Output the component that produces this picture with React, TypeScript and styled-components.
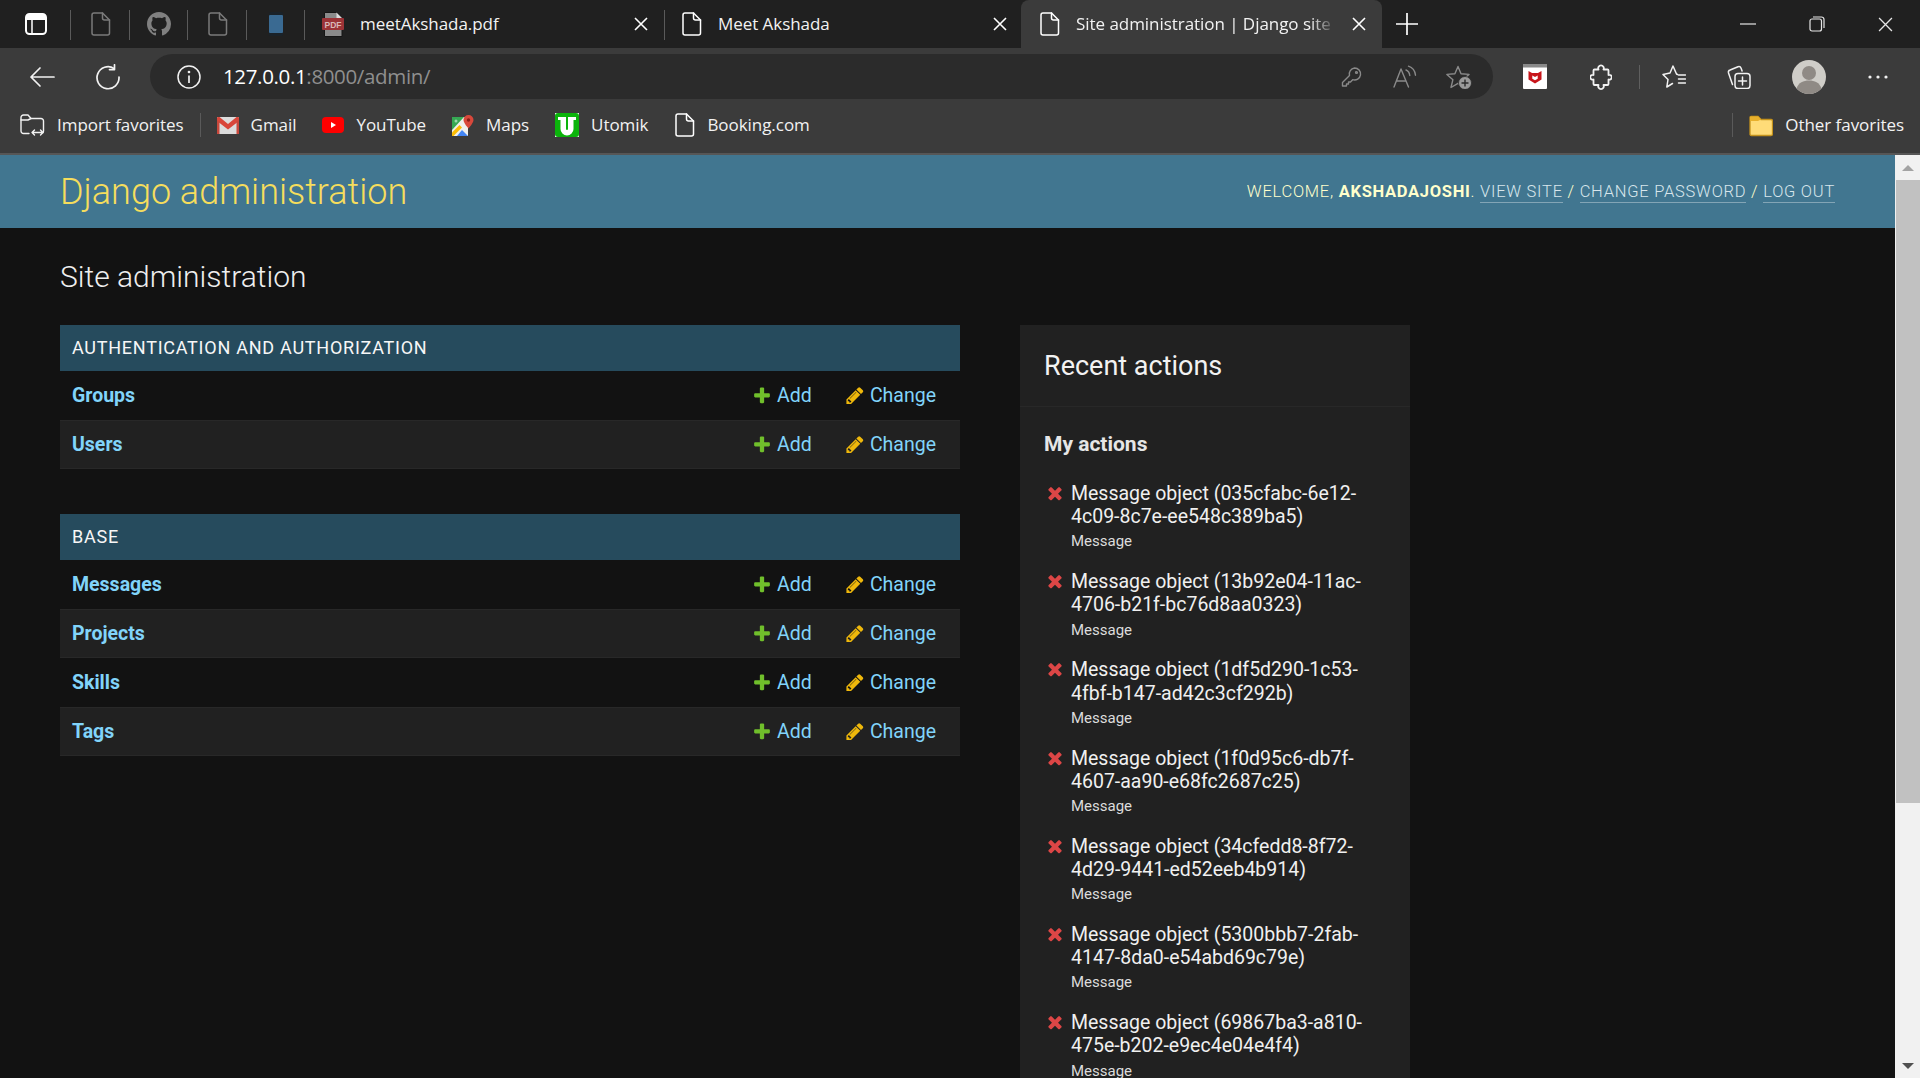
import React from "react";
import styled, { createGlobalStyle } from "styled-components";

const Global = createGlobalStyle`
  html, body { margin: 0; padding: 0; height: 1078px; overflow: hidden; background: #121212; }
  * { box-sizing: border-box; }
  #root { height: 1078px; }
`;

const uiFont = `"Open Sans", "Noto Sans", sans-serif`;
const pageFont = `Roboto, "Liberation Sans", sans-serif`;

const Shell = styled.div`
  height: 1078px;
  display: flex;
  flex-direction: column;
  overflow: hidden;
  font-family: ${pageFont};
`;

/* ---------- browser chrome ---------- */
const TabStrip = styled.div`
  height: 48px;
  flex: none;
  background: #202020;
  display: flex;
  align-items: stretch;
`;
const Pinned = styled.div<{ $w: number }>`
  width: ${(p) => p.$w}px;
  flex: none;
  display: flex;
  align-items: center;
  justify-content: center;
  position: relative;
  &::after {
    content: "";
    position: absolute;
    right: 0;
    top: 10px;
    bottom: 8px;
    width: 1px;
    background: #5a5a5a;
  }
`;
const Tab = styled.div<{ $w: number; $active?: boolean; $sep?: boolean; $pr: number }>`
  width: ${(p) => p.$w}px;
  flex: none;
  display: flex;
  align-items: center;
  gap: 16px;
  padding: 0 ${(p) => p.$pr}px 0 ${(p) => (p.$active ? 19 : 17)}px;
  background: ${(p) => (p.$active ? "#3b3b3b" : "transparent")};
  border-radius: ${(p) => (p.$active ? "8px 8px 0 0" : "0")};
  position: relative;
  ${(p) =>
    p.$sep
      ? `&::after { content: ""; position: absolute; right: 0; top: 10px; bottom: 8px; width: 1px; background: #5a5a5a; }`
      : ""}
`;
const TabTitle = styled.span<{ $fade?: boolean }>`
  flex: 1;
  min-width: 0;
  white-space: nowrap;
  overflow: hidden;
  font: 400 17px/22px ${uiFont};
  color: #f2f2f2;
  letter-spacing: -0.05px;
  ${(p) =>
    p.$fade
      ? `-webkit-mask-image: linear-gradient(to right, #000 90%, transparent 100%); mask-image: linear-gradient(to right, #000 90%, transparent 100%);`
      : ""}
`;
const NewTab = styled.div`
  width: 50px;
  flex: none;
  display: flex;
  align-items: center;
  justify-content: center;
`;
const Spacer = styled.div`
  flex: 1;
`;
const WindowButton = styled.div`
  width: 69px;
  flex: none;
  display: flex;
  align-items: center;
  justify-content: center;
`;
const Toolbar = styled.div`
  height: 57px;
  flex: none;
  background: #3b3b3b;
  padding: 6px 0 6px 0;
  display: flex;
  align-items: stretch;
`;
const ToolButton = styled.div<{ $w: number }>`
  width: ${(p) => p.$w}px;
  flex: none;
  display: flex;
  align-items: center;
  justify-content: center;
`;
const AddressBar = styled.div`
  width: 1343px;
  flex: none;
  background: #2b2b2b;
  border-radius: 23px;
  display: flex;
  align-items: center;
  padding-left: 27px;
  margin: 0 14px 0 18px;
`;
const Url = styled.div`
  flex: 1;
  margin-left: 22px;
  padding-bottom: 2px;
  font: 400 20.5px/26px ${uiFont};
  letter-spacing: -0.35px;
  color: #8f8f8f;
  & b {
    font-weight: 400;
    color: #fff;
  }
`;
const ToolSep = styled.div`
  width: 1px;
  height: 24px;
  align-self: center;
  background: #5f5f5f;
  flex: none;
`;
const BookmarkBar = styled.div`
  height: 50px;
  flex: none;
  background: #3b3b3b;
  border-bottom: 2px solid #565656;
  display: flex;
  align-items: center;
  padding: 0 0 8px 20px;
`;
const Bookmark = styled.div<{ $mr?: number }>`
  display: flex;
  align-items: center;
  gap: 12px;
  margin-right: ${(p) => p.$mr ?? 26}px;
  font: 400 17px/22px ${uiFont};
  letter-spacing: -0.05px;
  color: #f2f2f2;
  white-space: nowrap;
`;
const BookSep = styled.div`
  width: 1px;
  height: 24px;
  background: #5a5a5a;
  margin-right: 16px;
  flex: none;
`;

/* ---------- page ---------- */
const Viewport = styled.div`
  flex: 1;
  min-height: 0;
  display: flex;
`;
const Page = styled.div`
  flex: 1;
  min-width: 0;
  background: #121212;
  overflow: hidden;
`;
const Header = styled.header`
  height: 73px;
  background: #417690;
  display: flex;
  align-items: center;
  justify-content: space-between;
  padding: 0 60px;
`;
const Branding = styled.h1`
  margin: 0;
  font: 300 36px/44px ${pageFont};
  color: #f5dd5d;
`;
const UserTools = styled.div`
  font: 300 16.5px/22px ${pageFont};
  color: #ffffcc;
  text-transform: uppercase;
  letter-spacing: 0.75px;
  & strong {
    font-weight: 700;
    letter-spacing: 0.7px;
  }
`;
const ToolLink = styled.a`
  color: #d8e6ec;
  border-bottom: 1px solid rgba(255, 255, 255, 0.35);
  padding-bottom: 1px;
`;
const Content = styled.main`
  padding: 31px 60px 0;
`;
const Title = styled.h2`
  margin: 0 0 30px;
  font: 300 30px/36px ${pageFont};
  color: #eeeeee;
`;
const Columns = styled.div`
  display: flex;
  align-items: flex-start;
  gap: 60px;
`;
const MainColumn = styled.div`
  width: 900px;
  flex: none;
  display: flex;
  flex-direction: column;
  gap: 45px;
`;
const Module = styled.section``;
const Caption = styled.div`
  height: 46px;
  background: #264b5d;
  display: flex;
  align-items: center;
  padding-left: 12px;
  font: 400 18px/24px ${pageFont};
  letter-spacing: 0.75px;
  color: #f7f7f7;
  text-transform: uppercase;
`;
const Row = styled.div<{ $alt?: boolean }>`
  height: 49px;
  display: grid;
  grid-template-columns: 1fr 93px 91px;
  align-items: center;
  padding: 0 24px 0 12px;
  background: ${(p) => (p.$alt ? "#212121" : "#121212")};
  border-top: 1px solid ${(p) => (p.$alt ? "#282828" : "transparent")};
  border-bottom: 1px solid ${(p) => (p.$alt ? "#282828" : "transparent")};
`;
const RowName = styled.a`
  font: 700 19.5px/24px ${pageFont};
  letter-spacing: 0;
  color: #81d4fa;
`;
const RowAction = styled.a`
  display: flex;
  align-items: center;
  gap: 5px;
  font: 400 19.5px/24px ${pageFont};
  color: #81d4fa;
`;
const Recent = styled.aside`
  width: 390px;
  flex: none;
  background: #212121;
  padding-bottom: 40px;
`;
const RecentHead = styled.h2`
  margin: 0;
  height: 82px;
  display: flex;
  align-items: center;
  padding-left: 24px;
  border-bottom: 1px solid #282828;
  font: 400 27px/32px ${pageFont};
  color: #f2f2f2;
`;
const MyActions = styled.h3`
  margin: 0;
  padding: 25px 24px 0;
  font: 700 21px/24px ${pageFont};
  color: #e6e6e6;
`;
const ActionList = styled.ul`
  list-style: none;
  margin: 26px 0 0;
  padding: 0 24px 0 25px;
  display: flex;
  flex-direction: column;
  gap: 18.8px;
`;
const ActionItem = styled.li`
  display: grid;
  grid-template-columns: 26px 1fr;
`;
const ActionIcon = styled.div`
  padding-top: 1px;
`;
const ActionName = styled.div`
  font: 400 19.5px/23.2px ${pageFont};
  color: #f0f0f0;
  overflow-wrap: anywhere;
`;
const ActionType = styled.div`
  margin-top: 3px;
  font: 400 15px/20px ${pageFont};
  color: #dcdcdc;
`;
const ScrollTrack = styled.div`
  width: 25px;
  flex: none;
  background: #f1f1f1;
  display: flex;
  flex-direction: column;
  align-items: stretch;
  padding-left: 1px;
`;
const ScrollCap = styled.div<{ $up?: boolean }>`
  height: 25px;
  flex: none;
  display: flex;
  align-items: center;
  justify-content: center;
  &::before {
    content: "";
    width: 0;
    height: 0;
    border-left: 6px solid transparent;
    border-right: 6px solid transparent;
    ${(p) => (p.$up ? "border-bottom: 6px solid #a3a3a3;" : "border-top: 6px solid #505050;")}
  }
`;
const ScrollThumb = styled.div`
  height: 623px;
  flex: none;
  background: #c1c1c1;
`;
const ScrollRest = styled.div`
  flex: 1;
`;

/* ---------- drawings ---------- */
const Line = { fill: "none", strokeLinecap: "round", strokeLinejoin: "round" } as const;

const SidebarIcon = () => (
  <svg width="22" height="22" viewBox="0 0 22 22">
    <rect x="1" y="1" width="20" height="20" rx="3.5" fill="none" stroke="#fff" strokeWidth="2" />
    <path d="M1 4.500A3.500 3.500 0 0 1 4.500 1h13A3.500 3.500 0 0 1 21 4.500V7H1z" fill="#fff" />
    <path d="M7 7v14" stroke="#fff" strokeWidth="1.500" />
  </svg>
);
const PageIcon = ({ c = "#fff", s = 1.5 }: { c?: string; s?: number }) => (
  <svg width="20" height="24" viewBox="0 0 20 24" {...Line} stroke={c} strokeWidth={s}>
    <path d="M3 1h8.500L18.500 8v13a2 2 0 0 1-2 2H3a2 2 0 0 1-2-2V3A2 2 0 0 1 3 1z" />
    <path d="M11.500 1V6a2 2 0 0 0 2 2h5" />
  </svg>
);
const GithubIcon = () => (
  <svg width="24" height="24" viewBox="0 0 16 16" fill="#808080">
    <path d="M8 0C3.58 0 0 3.58 0 8c0 3.54 2.29 6.53 5.47 7.59.4.07.55-.17.55-.38 0-.19-.01-.82-.01-1.49-2.01.37-2.53-.49-2.69-.94-.09-.23-.48-.94-.82-1.13-.28-.15-.68-.52-.01-.53.63-.01 1.08.58 1.23.82.72 1.21 1.87.87 2.33.66.07-.52.28-.87.51-1.07-1.78-.2-3.64-.89-3.64-3.95 0-.87.31-1.59.82-2.15-.08-.2-.36-1.02.08-2.12 0 0 .67-.21 2.2.82.64-.18 1.32-.27 2-.27s1.36.09 2 .27c1.53-1.04 2.2-.82 2.2-.82.44 1.1.16 1.92.08 2.12.51.56.82 1.27.82 2.15 0 3.07-1.87 3.75-3.65 3.95.29.25.54.73.54 1.48 0 1.07-.01 1.93-.01 2.2 0 .21.15.46.55.38A8.01 8.01 0 0 0 16 8c0-4.42-3.58-8-8-8z" />
  </svg>
);
const PhoneTab = () => (
  <svg width="14" height="24" viewBox="0 0 14 24">
    <rect width="14" height="24" rx="1.500" fill="#1a2229" />
    <rect y="3" width="14" height="18" rx="1" fill="#3a6a92" />
  </svg>
);
const PdfIcon = () => (
  <svg width="22" height="25" viewBox="0 0 22 25">
    <path d="M2.500 0.500h12l5.500 5.500v18.500H2.500z" fill="#8a8a8a" stroke="#151515" />
    <path d="M14.500 0.500v5.500h5.500z" fill="#dcdcdc" />
    <rect x="0" y="6" width="22" height="12" rx="1" fill="#9c3337" />
    <text x="11" y="15.500" textAnchor="middle" fontSize="8.500" fontWeight="700" fontFamily="Liberation Sans, sans-serif" fill="#d9b8b8">PDF</text>
  </svg>
);
const CloseIcon = ({ s = 14, c = "#fff", w = 1.6 }: { s?: number; c?: string; w?: number }) => (
  <svg width={s} height={s} viewBox="0 0 14 14" stroke={c} strokeWidth={w} fill="none">
    <path d="M1 1l12 12M13 1L1 13" />
  </svg>
);
const PlusIcon = () => (
  <svg width="22" height="24" viewBox="0 0 22 24" stroke="#fff" strokeWidth="1.700" fill="none">
    <path d="M11 1v22M0 12h22" />
  </svg>
);
const MinIcon = () => (
  <svg width="16" height="2" viewBox="0 0 16 2"><path d="M0 1h16" stroke="#e6e6e6" strokeWidth="1.200" /></svg>
);
const RestoreIcon = () => (
  <svg width="16" height="16" viewBox="0 0 16 16" fill="none" stroke="#e6e6e6" strokeWidth="1.200">
    <rect x="1" y="3" width="11.500" height="12" rx="2" />
    <path d="M4 1h8.500a2.500 2.500 0 0 1 2.500 2.500V12" />
  </svg>
);
const BackIcon = () => (
  <svg width="26" height="22" viewBox="0 0 26 22" {...Line} stroke="#f2f2f2" strokeWidth="1.700">
    <path d="M25 11H2M11 2l-9 9 9 9" />
  </svg>
);
const RefreshIcon = () => (
  <svg width="26" height="26" viewBox="0 0 26 26" {...Line} stroke="#f2f2f2" strokeWidth="1.700">
    <path d="M19 4.500A11 11 0 1 0 24 13" />
    <path d="M19.500 0.800V5.600H14.500" />
  </svg>
);
const InfoIcon = () => (
  <svg width="24" height="24" viewBox="0 0 24 24" fill="none" stroke="#f2f2f2" strokeWidth="1.500">
    <circle cx="12" cy="12" r="11" />
    <path d="M12 10.500V18" strokeWidth="1.700" />
    <circle cx="12" cy="7" r="0.600" fill="#f2f2f2" />
  </svg>
);
const KeyIcon = () => (
  <svg width="21" height="20" viewBox="0 0 21 20" {...Line} stroke="#8a8a8a" strokeWidth="1.400">
    <path d="M13.500 1a6 6 0 1 1-1.800 11.700L9.500 15H7.500v2H5.500v2H1.500v-3.500l7-7A6 6 0 0 1 13.500 1z" />
    <circle cx="15.500" cy="5.500" r="0.900" />
  </svg>
);
const ReadIcon = () => (
  <svg width="24" height="23" viewBox="0 0 24 23" {...Line} stroke="#8a8a8a" strokeWidth="1.400">
    <path d="M1 22L8 4l7.500 18M3.500 16h9.500" />
    <path d="M13 5c2.200.8 3.500 2.800 3.800 5.500M15.500 1.200c3.800 1.300 6.500 4.600 7 9" />
  </svg>
);
const FavAddIcon = () => (
  <svg width="26" height="24" viewBox="0 0 26 24">
    <path d="M12 1.500l3 7.200 8 .7-6 5.300 1.800 7.800-6.800-4.200-7 4.200 1.900-7.800-6-5.300 8-.7z" fill="none" stroke="#8a8a8a" strokeWidth="1.400" strokeLinejoin="round" />
    <circle cx="19" cy="18" r="6.500" fill="#9a9a9a" stroke="#2b2b2b" strokeWidth="0.800" />
    <path d="M19 14.500v7M15.500 18h7" stroke="#2b2b2b" strokeWidth="1.400" />
  </svg>
);
const McAfeeIcon = () => (
  <svg width="24" height="25" viewBox="0 0 24 25">
    <rect width="24" height="25" rx="1" fill="#fff" />
    <rect width="24" height="3.500" fill="#8a8a8a" />
    <path d="M5.500 7L9 9h6l3.500-2v8.500L12 19.500l-6.500-4z" fill="#c8151b" />
    <path d="M9.300 11.500L12 13l2.700-1.500v3.300L12 16.300l-2.700-1.500z" fill="#fff" />
  </svg>
);
const PuzzleIcon = () => (
  <svg width="22" height="26" viewBox="0 0 22 26" {...Line} stroke="#f2f2f2" strokeWidth="1.800">
    <path d="M8.500 5.500a2.800 2.800 0 1 1 5 0H17.500a1 1 0 0 1 1 1V11a2.400 2.400 0 1 1 0 4.500v4.500a1 1 0 0 1-1 1H13.500a2.800 2.800 0 1 1-5 0H4.500a1 1 0 0 1-1-1v-4.500a2.400 2.400 0 1 1 0-4.500V6.500a1 1 0 0 1 1-1z" />
  </svg>
);
const FavoritesIcon = () => (
  <svg width="24" height="23" viewBox="0 0 24 23" {...Line} stroke="#f2f2f2" strokeWidth="1.500">
    <path d="M15.500 9.500L14.500 9 11 1 8 8 1 9.500 6 14.500 4.800 22 10.500 18.500" />
    <path d="M16.500 10h7M16.500 14h7M16.500 18h7" />
  </svg>
);
const CollectionsIcon = () => (
  <svg width="24" height="24" viewBox="0 0 24 24" {...Line} stroke="#f2f2f2" strokeWidth="1.500">
    <path d="M5.500 19.500L1.500 8a2.500 2.500 0 0 1 1.600-3L11 1.700a2.500 2.500 0 0 1 3.100 1.500l1 2.800" />
    <rect x="8" y="8.500" width="15" height="15" rx="3" />
    <path d="M15.500 12v8M11.500 16h8" />
  </svg>
);
const AvatarIcon = () => (
  <svg width="34" height="34" viewBox="0 0 34 34">
    <circle cx="17" cy="17" r="17" fill="#cfcdc8" />
    <circle cx="17" cy="13" r="7" fill="#8f8a85" />
    <path d="M4.500 28.500c2-6 7-8 12.500-8s10.500 2 12.500 8A17 17 0 0 1 17 34 17 17 0 0 1 4.500 28.500z" fill="#8f8a85" />
  </svg>
);
const DotsIcon = () => (
  <svg width="20" height="4" viewBox="0 0 20 4" fill="#f2f2f2">
    <circle cx="2" cy="2" r="1.600" /><circle cx="10" cy="2" r="1.600" /><circle cx="18" cy="2" r="1.600" />
  </svg>
);
const ImportIcon = () => (
  <svg width="25" height="22" viewBox="0 0 25 22" {...Line} stroke="#f2f2f2" strokeWidth="1.400">
    <path d="M9 19.500H3.500A2.500 2.500 0 0 1 1 17V3.500A2.500 2.500 0 0 1 3.500 1H8l3 3.500h10A2.500 2.500 0 0 1 23.500 7v10a2.500 2.500 0 0 1-.7 1.800" />
    <path d="M1 6h7l3-1.500" />
    <path d="M12 18.500h11M14.500 16l-2.500 2.500 2.500 2.500M20.500 16l2.500 2.500-2.500 2.500" />
  </svg>
);
const GmailIcon = () => (
  <svg width="22" height="17" viewBox="0 0 22 17">
    <rect width="22" height="17" rx="1" fill="#dcdcdc" />
    <path d="M0 1a1 1 0 0 1 1-1h1.500L11 7l8.500-7H21a1 1 0 0 1 1 1v3l-11 8.500L0 4z" fill="#d9463a" />
    <path d="M0 3v14h2.500V4.500zM22 3v14h-2.500V4.500z" fill="#c8483c" />
  </svg>
);
const YouTubeIcon = () => (
  <svg width="22" height="16" viewBox="0 0 22 16">
    <rect width="22" height="16" rx="4" fill="#f00" />
    <path d="M9 5l5 3-5 3z" fill="#fff" />
  </svg>
);
const MapsIcon = () => (
  <svg width="22" height="21" viewBox="0 0 22 21">
    <path d="M0 2h16v19H0z" fill="#f0f0ec" />
    <path d="M0 2h12L0 15z" fill="#35a853" />
    <path d="M0 21v-3.500L7.500 10l2.500 2.500-8.500 8.500z" fill="#fbbc04" />
    <path d="M5 21l5-6 6 6z" fill="#4285f4" />
    <circle cx="4" cy="6" r="1.500" fill="#9bd8ad" />
    <path d="M16.500 0a5 5 0 0 1 5 5c0 3-5 8.500-5 8.500s-5-5.500-5-8.500a5 5 0 0 1 5-5z" fill="#d8483b" />
    <circle cx="16.500" cy="5" r="1.700" fill="#8a2018" />
  </svg>
);
const UtomikIcon = () => (
  <svg width="24" height="24" viewBox="0 0 24 24">
    <rect width="24" height="24" fill="#f4f4f4" />
    <rect width="24" height="24" rx="3" fill="#0bb30b" />
    <path d="M3 4h8v12a1 1 0 0 0 2 0V4h8v3h-2.500v9a6.500 6.500 0 0 1-13 0V7H3z" fill="#fff" />
  </svg>
);
const FolderIcon = () => (
  <svg width="24" height="23" viewBox="0 0 24 23">
    <path d="M2 2.500h7l3 3h10a1.500 1.500 0 0 1 1.500 1.500v13a1.500 1.500 0 0 1-1.500 1.500H2.500A1.500 1.500 0 0 1 1 20.500V3.500a1 1 0 0 1 1-1z" fill="#ffdc78" stroke="#c4921c" strokeWidth="1.300" />
    <path d="M1 7V3.500a1 1 0 0 1 1-1h7l3 3-3 1.500z" fill="#e8b02c" />
  </svg>
);
const AddGlyph = () => (
  <svg width="20" height="20" viewBox="0 0 1792 1792" fill="#70bf2b">
    <path d="M1600 736v192q0 40-28 68t-68 28h-416v416q0 40-28 68t-68 28h-192q-40 0-68-28t-28-68v-416h-416q-40 0-68-28t-28-68v-192q0-40 28-68t68-28h416v-416q0-40 28-68t68-28h192q40 0 68 28t28 68v416h416q40 0 68 28t28 68z" />
  </svg>
);
const ChangeGlyph = () => (
  <svg width="21" height="21" viewBox="0 0 1792 1792" fill="#efb80b">
    <path d="M491 1536l91-91-235-235-91 91v107h128v128h107zm523-928q0-22-22-22-10 0-17 7l-542 542q-7 7-7 17 0 22 22 22 10 0 17-7l542-542q7-7 7-17zm-54-192l416 416-832 832h-416v-416zm683 96q0 53-37 90l-166 166-416-416 166-165q36-38 90-38 53 0 91 38l235 234q37 39 37 91z" />
  </svg>
);
const DeleteGlyph = () => (
  <svg width="20" height="20" viewBox="0 0 1792 1792" fill="#dd4646">
    <path d="M1490 1322q0 40-28 68l-136 136q-28 28-68 28t-68-28l-294-294-294 294q-28 28-68 28t-68-28l-136-136q-28-28-28-68t28-68l294-294-294-294q-28-28-28-68t28-68l136-136q28-28 68-28t68 28l294 294 294-294q28-28 68-28t68 28l136 136q28 28 28 68t-28 68l-294 294 294 294q28 28 28 68z" />
  </svg>
);

/* ---------- data ---------- */
const modules = [
  { name: "Authentication and Authorization", rows: ["Groups", "Users"] },
  { name: "Base", rows: ["Messages", "Projects", "Skills", "Tags"] },
];
const actions = [
  "Message object (035cfabc-6e12-4c09-8c7e-ee548c389ba5)",
  "Message object (13b92e04-11ac-4706-b21f-bc76d8aa0323)",
  "Message object (1df5d290-1c53-4fbf-b147-ad42c3cf292b)",
  "Message object (1f0d95c6-db7f-4607-aa90-e68fc2687c25)",
  "Message object (34cfedd8-8f72-4d29-9441-ed52eeb4b914)",
  "Message object (5300bbb7-2fab-4147-8da0-e54abd69c79e)",
  "Message object (69867ba3-a810-475e-b202-e9ec4e04e4f4)",
];

export default function App() {
  return (
    <Shell>
      <Global />
      <TabStrip>
        <Pinned $w={71}><SidebarIcon /></Pinned>
        <Pinned $w={59}><PageIcon c="#7a7a7a" /></Pinned>
        <Pinned $w={58}><GithubIcon /></Pinned>
        <Pinned $w={59}><PageIcon c="#7a7a7a" /></Pinned>
        <Pinned $w={58}><PhoneTab /></Pinned>
        <Tab $w={360} $sep $pr={17}>
          <PdfIcon />
          <TabTitle>meetAkshada.pdf</TabTitle>
          <CloseIcon />
        </Tab>
        <Tab $w={356} $pr={14}>
          <PageIcon />
          <TabTitle>Meet Akshada</TabTitle>
          <CloseIcon />
        </Tab>
        <Tab $w={361} $active $pr={16}>
          <PageIcon />
          <TabTitle $fade>Site administration | Django site admin</TabTitle>
          <CloseIcon />
        </Tab>
        <NewTab><PlusIcon /></NewTab>
        <Spacer />
        <WindowButton><MinIcon /></WindowButton>
        <WindowButton><RestoreIcon /></WindowButton>
        <WindowButton><CloseIcon s={15} c="#e6e6e6" w={1.2} /></WindowButton>
      </TabStrip>
      <Toolbar>
        <ToolButton $w={84}><BackIcon /></ToolButton>
        <ToolButton $w={48}><RefreshIcon /></ToolButton>
        <AddressBar>
          <InfoIcon />
          <Url><b>127.0.0.1</b>:8000/admin/</Url>
          <ToolButton $w={54}><KeyIcon /></ToolButton>
          <ToolButton $w={54}><ReadIcon /></ToolButton>
          <ToolButton $w={54}><FavAddIcon /></ToolButton>
          <ToolButton $w={7} />
        </AddressBar>
        <ToolButton $w={56}><McAfeeIcon /></ToolButton>
        <ToolButton $w={76}><PuzzleIcon /></ToolButton>
        <ToolSep />
        <ToolButton $w={68}><FavoritesIcon /></ToolButton>
        <ToolButton $w={62}><CollectionsIcon /></ToolButton>
        <ToolButton $w={77}><AvatarIcon /></ToolButton>
        <ToolButton $w={62}><DotsIcon /></ToolButton>
      </Toolbar>
      <BookmarkBar>
        <Bookmark $mr={16}><ImportIcon />Import favorites</Bookmark>
        <BookSep />
        <Bookmark><GmailIcon />Gmail</Bookmark>
        <Bookmark><YouTubeIcon />YouTube</Bookmark>
        <Bookmark><MapsIcon />Maps</Bookmark>
        <Bookmark $mr={27}><UtomikIcon />Utomik</Bookmark>
        <Bookmark><PageIcon />Booking.com</Bookmark>
        <Spacer />
        <BookSep />
        <Bookmark $mr={16}><FolderIcon />Other favorites</Bookmark>
      </BookmarkBar>
      <Viewport>
        <Page>
          <Header>
            <Branding>Django administration</Branding>
            <UserTools>
              Welcome, <strong>akshadajoshi</strong>. <ToolLink>View site</ToolLink> / <ToolLink>Change password</ToolLink> / <ToolLink>Log out</ToolLink>
            </UserTools>
          </Header>
          <Content>
            <Title>Site administration</Title>
            <Columns>
              <MainColumn>
                {modules.map((m) => (
                  <Module key={m.name}>
                    <Caption>{m.name}</Caption>
                    {m.rows.map((r, i) => (
                      <Row key={r} $alt={i % 2 === 1}>
                        <RowName>{r}</RowName>
                        <RowAction><AddGlyph />Add</RowAction>
                        <RowAction><ChangeGlyph />Change</RowAction>
                      </Row>
                    ))}
                  </Module>
                ))}
              </MainColumn>
              <Recent>
                <RecentHead>Recent actions</RecentHead>
                <MyActions>My actions</MyActions>
                <ActionList>
                  {actions.map((a) => (
                    <ActionItem key={a}>
                      <ActionIcon><DeleteGlyph /></ActionIcon>
                      <div>
                        <ActionName>{a}</ActionName>
                        <ActionType>Message</ActionType>
                      </div>
                    </ActionItem>
                  ))}
                </ActionList>
              </Recent>
            </Columns>
          </Content>
        </Page>
        <ScrollTrack>
          <ScrollCap $up />
          <ScrollThumb />
          <ScrollRest />
          <ScrollCap />
        </ScrollTrack>
      </Viewport>
    </Shell>
  );
}
